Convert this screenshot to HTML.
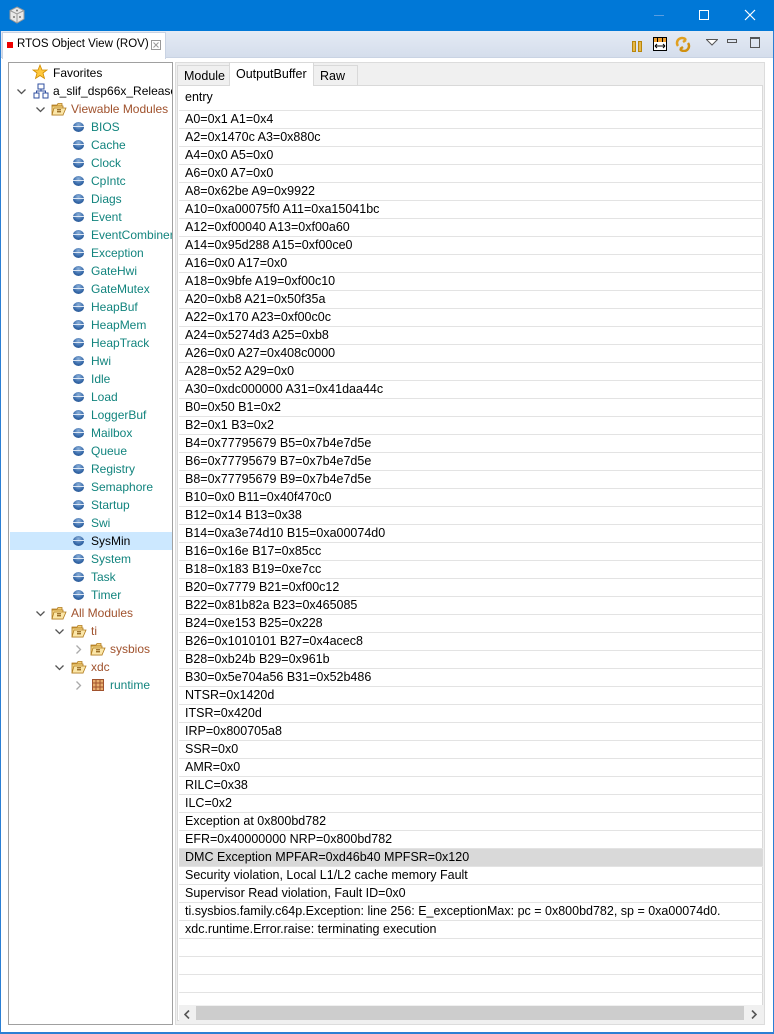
<!DOCTYPE html>
<html><head><meta charset="utf-8">
<style>
*{margin:0;padding:0;box-sizing:border-box}
body{width:774px;height:1034px;overflow:hidden;background:#fff;font-family:"Liberation Sans",sans-serif;font-size:12px;color:#000;position:relative}
.abs{position:absolute}
#title{left:0;top:0;width:774px;height:31px;background:#0078d7}
#frame{left:0;top:31px;width:774px;height:1003px;border-left:1px solid #2b7fd4;border-right:1px solid #2b7fd4;border-bottom:2px solid #2b7fd4;background:#fff}
#tabbar{left:1px;top:31px;width:772px;height:27px;background:linear-gradient(#e4eaf4,#d5deec);border-bottom:1px solid #c9d3e3}
#vtab{left:2px;top:32px;width:164px;height:27px;background:#fff;border:1px solid #c9d3e3;border-bottom:none}
#tree{left:8px;top:62px;width:165px;height:963px;border:1px solid #a0a0a0;background:#fff;overflow:hidden}
.ti{position:absolute;height:18px;line-height:18px;white-space:nowrap}
.mod{color:#12847e}
.fold{color:#a0522d}
.dot{position:absolute;width:11px;height:10px;border-radius:50%;background:radial-gradient(circle at 50% 30%,#8fb3dc,#3568a8 60%,#234d85);}
.dot:after{content:"";position:absolute;left:0;right:0;top:4px;height:1px;background:#dfe8f4}
.chev{position:absolute}
#right{left:175px;top:62px;width:590px;height:963px;background:#f0f0f0;border:1px solid #dcdcdc}
.tab{position:absolute;height:21px;line-height:20px;padding-left:6px;background:#f0f0f0;border:1px solid #d9d9d9;border-bottom:none;font-size:12.5px}
#table{left:177px;top:85px;width:586px;height:936px;background:#fff;border:1px solid #d9d9d9}
.row{position:absolute;left:1px;width:584px;height:18px;line-height:17px;padding-left:6px;border-bottom:1px solid #e3e3e3;white-space:nowrap;font-size:12.5px}
</style></head><body>
<div id="title" class="abs">
 <svg class="abs" style="left:8px;top:6px" width="18" height="18" viewBox="0 0 18 18"><path d="M9 1L16 4.5V13L9 17L2 13V4.5Z" fill="#e8e8e8" stroke="#999"/><path d="M2 4.5L9 8L16 4.5M9 8V17" stroke="#999" fill="none"/><circle cx="6" cy="11" r="1" fill="#777"/><circle cx="12" cy="11" r="1" fill="#777"/><circle cx="9" cy="4.5" r="1" fill="#777"/></svg>
 <div class="abs" style="left:654px;top:15px;width:10px;height:1px;background:#5a9de0"></div>
 <div class="abs" style="left:699px;top:10px;width:10px;height:10px;border:1px solid #fff"></div>
 <svg class="abs" style="left:744px;top:9px" width="12" height="12"><path d="M1 1L11 11M11 1L1 11" stroke="#fff" stroke-width="1.2"/></svg>
</div>
<div id="frame" class="abs"></div>
<div id="tabbar" class="abs"></div>
<div id="vtab" class="abs">
 <div class="abs" style="left:4px;top:9px;width:6px;height:6px;background:#e00"></div>
 <div class="abs" style="left:14px;top:5px;font-size:11.5px">RTOS Object View (ROV)</div>
 <svg class="abs" style="left:148px;top:7px" width="10" height="10"><rect x="0.5" y="0.5" width="9" height="9" fill="none" stroke="#999"/><path d="M2.5 2.5L7.5 7.5M7.5 2.5L2.5 7.5" stroke="#999"/></svg>
</div>
<div class="abs" style="left:632px;top:41px;width:4px;height:11px;background:#e6b84a;border:1px solid #b8860b"></div>
<div class="abs" style="left:638px;top:41px;width:4px;height:11px;background:#e6b84a;border:1px solid #b8860b"></div>
<svg class="abs" style="left:653px;top:37px" width="14" height="14"><rect x="0.5" y="0.5" width="13" height="13" fill="#fff" stroke="#000"/><rect x="1" y="1" width="12" height="4" fill="#f0a030"/><path d="M4.5 1V5M9.5 1V5" stroke="#000"/><path d="M2 9H12M2 9L4 7M2 9L4 11M12 9L10 7M12 9L10 11" stroke="#000" fill="none"/></svg>
<svg class="abs" style="left:675px;top:36px" width="16" height="16"><path d="M3 10A5 5 0 0 1 11 4M11 4L9 2M11 4L8 6" stroke="#e0a020" stroke-width="2.5" fill="none"/><path d="M13 7A5 5 0 0 1 5 13M5 13L7 15M5 13L8 11" stroke="#d09010" stroke-width="2.5" fill="none"/></svg>
<svg class="abs" style="left:706px;top:39px" width="12" height="7"><path d="M0.5 0.5H11.5L6 6Z" fill="#fff" stroke="#555"/></svg>
<div class="abs" style="left:727px;top:39px;width:10px;height:4px;border:1px solid #555"></div>
<div class="abs" style="left:750px;top:37px;width:10px;height:11px;border:1px solid #555;border-top-width:2px"></div>

<div id="tree" class="abs">
 <svg class="abs" style="left:23px;top:1px" width="16" height="16" viewBox="0 0 16 16"><path d="M8 1L10 6H15L11 9L12.5 14.5L8 11.5L3.5 14.5L5 9L1 6H6Z" fill="#ffc83d" stroke="#d08c00" stroke-width="0.8"/></svg>
 <div class="ti" style="left:44px;top:1px">Favorites</div>
 <svg class="chev" style="left:8px;top:26px" width="9" height="6"><path d="M0.5 0.5L4.5 4.5L8.5 0.5" stroke="#555" stroke-width="1.3" fill="none"/></svg>
 <svg class="abs" style="left:24px;top:20px" width="16" height="16"><rect x="5" y="1" width="6" height="5" fill="#fff" stroke="#2f4f9f"/><rect x="1" y="10" width="5" height="5" fill="#fff" stroke="#2f4f9f"/><rect x="10" y="10" width="5" height="5" fill="#fff" stroke="#2f4f9f"/><path d="M8 6V8H3.5V10M8 8H12.5V10" stroke="#2f4f9f" fill="none"/></svg>
 <div class="ti" style="left:44px;top:19px">a_slif_dsp66x_Release.out</div>
 <div id="treeitems"></div>
</div>

<div id="right" class="abs"></div>
<div class="tab" style="left:177px;top:65px;width:53px">Module</div>
<div class="tab" style="left:229px;top:62px;width:85px;height:24px;background:#fff;line-height:22px;z-index:2">OutputBuffer</div>
<div class="tab" style="left:313px;top:65px;width:45px">Raw</div>
<div id="table" class="abs">
 <div class="abs" style="left:7px;top:4px;font-size:12.5px">entry</div>
 <div class="abs" style="left:1px;top:24px;width:584px;height:1px;background:#e3e3e3"></div>
 <div id="rows"></div>
 <div class="abs" style="left:1px;top:919px;width:584px;height:16px;background:#f0f0f0"></div>
 <div class="abs" style="left:18px;top:920px;width:548px;height:14px;background:#cdcdcd"></div>
 <svg class="abs" style="left:6px;top:924px" width="6" height="9"><path d="M5 0.5L1 4.5L5 8.5" stroke="#555" stroke-width="1.6" fill="none"/></svg>
 <svg class="abs" style="left:573px;top:924px" width="6" height="9"><path d="M1 0.5L5 4.5L1 8.5" stroke="#555" stroke-width="1.6" fill="none"/></svg>
</div>
<script>
var folder='<svg width="16" height="14" viewBox="0 0 16 14"><path d="M1 3H6L7 1.5H11V4H1Z" fill="#f6d27a" stroke="#b07a1c" stroke-width="0.8"/><path d="M1 4H12V13H1Z" fill="#f8dc8c" stroke="#b07a1c" stroke-width="0.8"/><path d="M3 6H15L12 13H1Z" fill="#fbe6a8" stroke="#b07a1c" stroke-width="0.8"/><path d="M6 7.5H10M6 9.5H10M7 7.5V11M9 7.5V11" stroke="#8a5a10" stroke-width="0.7"/></svg>';
function dn(x,t){return '<svg class="chev" style="left:'+x+'px;top:'+(t+7)+'px" width="9" height="6"><path d="M0.5 0.5L4.5 4.5L8.5 0.5" stroke="#555" stroke-width="1.3" fill="none"/></svg>';}
function rt(x,t){return '<svg class="chev" style="left:'+x+'px;top:'+(t+5)+'px" width="6" height="9"><path d="M0.5 0.5L4.5 4.5L0.5 8.5" stroke="#aaa" stroke-width="1.3" fill="none"/></svg>';}
var T=document.getElementById('treeitems'),h='';
function y(n){return 1+18*n;}
h+=dn(27,y(2))+'<div class="abs" style="left:42px;top:'+(y(2)+2)+'px">'+folder+'</div><div class="ti fold" style="left:62px;top:'+y(2)+'px">Viewable Modules</div>';
var mods=['BIOS','Cache','Clock','CpIntc','Diags','Event','EventCombiner','Exception','GateHwi','GateMutex','HeapBuf','HeapMem','HeapTrack','Hwi','Idle','Load','LoggerBuf','Mailbox','Queue','Registry','Semaphore','Startup','Swi','SysMin','System','Task','Timer'];
mods.forEach(function(m,i){var t=y(3+i);
 if(m=='SysMin')h+='<div class="abs" style="left:1px;top:'+t+'px;width:162px;height:18px;background:#cce8ff"></div>';
 h+='<div class="dot" style="left:64px;top:'+(t+4)+'px"></div><div class="ti '+(m=='SysMin'?'':'mod')+'" style="left:82px;top:'+t+'px">'+m+'</div>';});
h+=dn(27,y(30))+'<div class="abs" style="left:42px;top:'+(y(30)+2)+'px">'+folder+'</div><div class="ti fold" style="left:62px;top:'+y(30)+'px">All Modules</div>';
h+=dn(46,y(31))+'<div class="abs" style="left:62px;top:'+(y(31)+2)+'px">'+folder+'</div><div class="ti fold" style="left:82px;top:'+y(31)+'px">ti</div>';
h+=rt(67,y(32))+'<div class="abs" style="left:81px;top:'+(y(32)+2)+'px">'+folder+'</div><div class="ti fold" style="left:101px;top:'+y(32)+'px">sysbios</div>';
h+=dn(46,y(33))+'<div class="abs" style="left:62px;top:'+(y(33)+2)+'px">'+folder+'</div><div class="ti fold" style="left:82px;top:'+y(33)+'px">xdc</div>';
h+=rt(67,y(34))+'<svg class="abs" style="left:83px;top:'+(y(34)+3)+'px" width="12" height="12"><rect x="0.5" y="0.5" width="11" height="11" fill="#e8b070" stroke="#a0522d"/><path d="M4 0.5V11.5M8 0.5V11.5M0.5 4H11.5M0.5 8H11.5" stroke="#a0522d"/></svg><div class="ti mod" style="left:101px;top:'+y(34)+'px">runtime</div>';
T.innerHTML=h;
var R=['A0=0x1 A1=0x4','A2=0x1470c A3=0x880c','A4=0x0 A5=0x0','A6=0x0 A7=0x0','A8=0x62be A9=0x9922','A10=0xa00075f0 A11=0xa15041bc','A12=0xf00040 A13=0xf00a60','A14=0x95d288 A15=0xf00ce0','A16=0x0 A17=0x0','A18=0x9bfe A19=0xf00c10','A20=0xb8 A21=0x50f35a','A22=0x170 A23=0xf00c0c','A24=0x5274d3 A25=0xb8','A26=0x0 A27=0x408c0000','A28=0x52 A29=0x0','A30=0xdc000000 A31=0x41daa44c','B0=0x50 B1=0x2','B2=0x1 B3=0x2','B4=0x77795679 B5=0x7b4e7d5e','B6=0x77795679 B7=0x7b4e7d5e','B8=0x77795679 B9=0x7b4e7d5e','B10=0x0 B11=0x40f470c0','B12=0x14 B13=0x38','B14=0xa3e74d10 B15=0xa00074d0','B16=0x16e B17=0x85cc','B18=0x183 B19=0xe7cc','B20=0x7779 B21=0xf00c12','B22=0x81b82a B23=0x465085','B24=0xe153 B25=0x228','B26=0x1010101 B27=0x4acec8','B28=0xb24b B29=0x961b','B30=0x5e704a56 B31=0x52b486','NTSR=0x1420d','ITSR=0x420d','IRP=0x800705a8','SSR=0x0','AMR=0x0','RILC=0x38','ILC=0x2','Exception at 0x800bd782','EFR=0x40000000 NRP=0x800bd782','DMC Exception MPFAR=0xd46b40 MPFSR=0x120','Security violation, Local L1/L2 cache memory Fault','Supervisor Read violation, Fault ID=0x0','ti.sysbios.family.c64p.Exception: line 256: E_exceptionMax: pc = 0x800bd782, sp = 0xa00074d0.','xdc.runtime.Error.raise: terminating execution','','',''];
var s='';R.forEach(function(r,i){s+='<div class="row" style="top:'+(25+18*i)+'px;'+(i==41?'background:#d9d9d9;':'')+'">'+r+'</div>';});
document.getElementById('rows').innerHTML=s;
</script>
</body></html>
